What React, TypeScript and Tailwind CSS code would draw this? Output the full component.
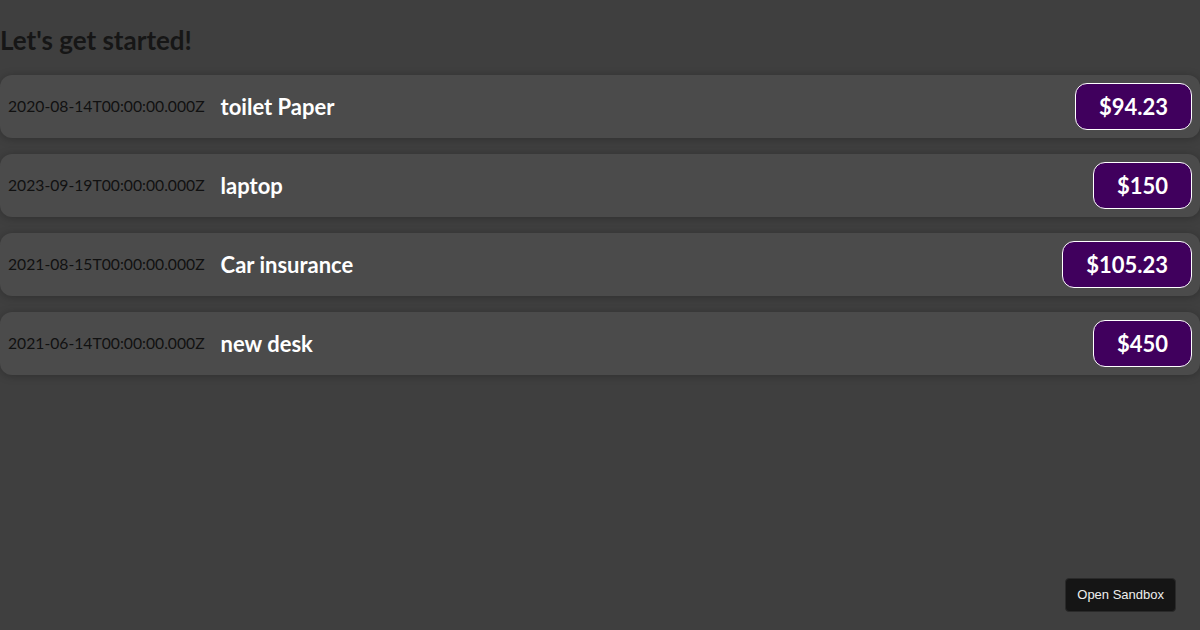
const expenses = [
  { date: "2020-08-14T00:00:00.000Z", title: "toilet Paper", amount: 94.23 },
  { date: "2023-09-19T00:00:00.000Z", title: "laptop", amount: 150 },
  { date: "2021-08-15T00:00:00.000Z", title: "Car insurance", amount: 105.23 },
  { date: "2021-06-14T00:00:00.000Z", title: "new desk", amount: 450 },
];

const ExpenseItem = (props: { date: string; title: string; amount: number }) => {
  return (
    <div className="flex items-center justify-between rounded-xl bg-[#4b4b4b] p-2 shadow-[0_1px_8px_rgba(0,0,0,0.25)]">
      <div className="flex items-center gap-4">
        <div className="text-[15.7px] text-[#111]">{props.date}</div>
        <h2 className="text-[22px] font-bold text-white">{props.title}</h2>
      </div>
      <div className="rounded-xl border border-white bg-[#40005d] px-[23px] py-2 text-[22px] leading-[29px] font-bold text-white">
        ${props.amount}
      </div>
    </div>
  );
};

export default function App() {
  return (
    <div className="min-h-[630px] bg-[#3f3f3f] font-['Lato',sans-serif]">
      <h1 className="pt-6 pb-[19px] text-[26px] leading-8 font-bold text-[#161616]">Let's get started!</h1>
      <div className="flex flex-col gap-4">
        {expenses.map((e, i) => (
          <ExpenseItem key={i} date={e.date} title={e.title} amount={e.amount} />
        ))}
      </div>
      <div className="fixed right-6 bottom-[18px] rounded border border-[#2a2a2a] bg-[#151515] px-[11px] py-2 font-['Liberation_Sans',sans-serif] text-[13px] leading-4 text-[#eee]">
        Open Sandbox
      </div>
    </div>
  );
}
